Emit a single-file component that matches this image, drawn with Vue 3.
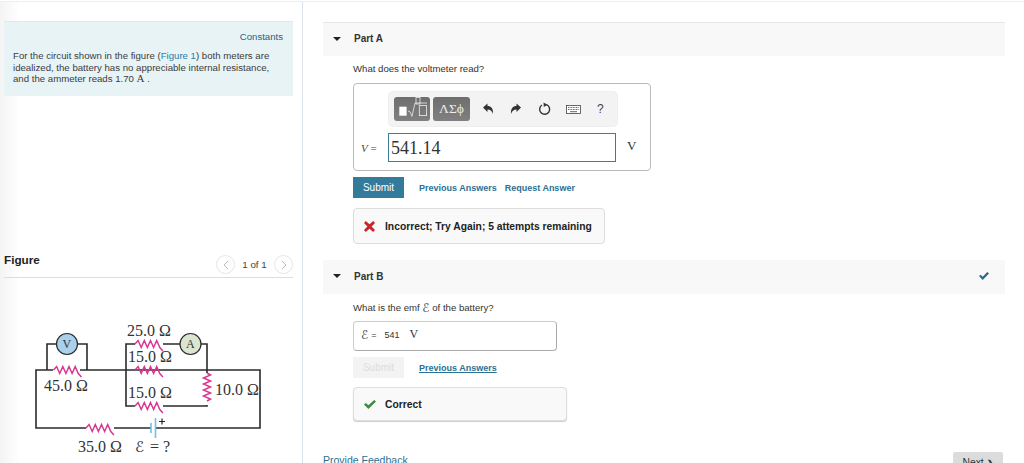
<script setup>
// resistor zigzags, drawn from their left end
const zig = (x, y) => {
  let d = `M${x} ${y}`
  const step = 3.1
  for (let i = 0; i < 9; i++) {
    const dy = i === 0 ? -3.5 : i === 8 ? 3.5 : i % 2 ? 7 : -7
    d += ` l${step} ${dy}`
  }
  return d
}
const horizontal = [[53.5, 370], [135, 344], [135, 370], [135, 406], [86, 428]]

const labels = [
  { x: 127, y: 336, t: '25.0 Ω' },
  { x: 128, y: 362, t: '15.0 Ω' },
  { x: 44, y: 391, t: '45.0 Ω' },
  { x: 128, y: 398, t: '15.0 Ω' },
  { x: 215, y: 395, t: '10.0 Ω' },
  { x: 78, y: 452, t: '35.0 Ω' },
]
</script>

<template>
  <div class="page">
    <div class="topline"></div>
    <div class="cols">
      <div class="left">
        <div class="intro">
          <div class="constants">Constants</div>
          <p>
            For the circuit shown in the figure (<span class="link">Figure 1</span>) both meters are
            idealized, the battery has no appreciable internal resistance,
            and the ammeter reads 1.70 <span class="serif amp">A</span> .
          </p>
        </div>

        <div class="fig-head">
          <span class="fig-title">Figure</span>
          <div class="pager">
            <span class="round">
              <svg width="6" height="10" viewBox="0 0 6 10"><path d="M5 1 1 5l4 4" fill="none" stroke="#bbb" stroke-width="1" /></svg>
            </span>
            <span class="count">1 of 1</span>
            <span class="round">
              <svg width="6" height="10" viewBox="0 0 6 10"><path d="M1 1l4 4-4 4" fill="none" stroke="#bbb" stroke-width="1" /></svg>
            </span>
          </div>
        </div>

        <svg class="circuit" width="289" height="185" viewBox="4 278 289 185">
          <g fill="none" stroke="#2b2b2b" stroke-width="1.6">
            <path d="M53 370H36V428H86M114 428H151M156 428H260V370H80" />
            <path d="M47 370V344H57M77 344H87V370" />
            <path d="M135 344H126V406H135M163 344H180M200 344H207V373M207 405V406H163" />
          </g>
          <g fill="none" stroke="#d9368f" stroke-width="1.500">
            <path v-for="(r, i) in horizontal" :key="i" :d="zig(r[0], r[1])" />
            <path d="M207 373l3.500 2-7 3 7 3-7 3 7 3-7 3 7 3-7 3 7 3-3.500 2" />
          </g>
          <circle cx="67" cy="344" r="10.500" fill="#a9d1ee" stroke="#2b2b2b" stroke-width="1.200" />
          <circle cx="190.500" cy="344" r="10.500" fill="#dce5cf" stroke="#2b2b2b" stroke-width="1.200" />
          <path d="M151 423V433M155.500 418V438" stroke="#6cc3e6" stroke-width="1.600" />
          <path d="M159 421.500H165M162 418.500V424.500" stroke="#222" stroke-width="1.200" />
          <g class="sym">
            <text x="62.500" y="348" font-size="12">V</text>
            <text x="186" y="348" font-size="12">A</text>
            <text v-for="l in labels" :key="l.t + l.x" :x="l.x" :y="l.y" font-size="16">{{ l.t }}</text>
            <text x="135" y="452" font-size="15"><tspan class="script">ℰ</tspan></text>
            <text x="150" y="452" font-size="16">= ?</text>
          </g>
        </svg>
      </div>

      <div class="right">
        <div class="part-head">
          <span class="tri"></span>
          <span class="part-name">Part A</span>
        </div>
        <div class="part-body">
          <div class="question">What does the voltmeter read?</div>
          <div class="answer">
            <div class="toolbar">
              <span class="tool-btn wide">
                <svg width="36" height="24" viewBox="0 0 36 24">
                  <rect x="5.300" y="9.700" width="7.300" height="9" fill="#fff" />
                  <rect x="22" y=".5" width="4" height="6.500" fill="none" stroke="#eee" stroke-width=".8" />
                  <path d="M14 14l2 .8 2 4.500 3-13.300h12" fill="none" stroke="#eee" stroke-width=".8" />
                  <rect x="25.300" y="8.600" width="7.300" height="10" fill="none" stroke="#eee" stroke-width=".8" />
                </svg>
              </span>
              <span class="tool-btn greek">ΛΣϕ</span>
              <svg class="ic ic-undo" width="12" height="12" viewBox="0 0 12 12"><path d="M1 4.500 5.500 .500V3C9 3 11.500 5.500 11 11 10 8 8.500 6.500 5.500 6.500V9Z" fill="#333" /></svg>
              <svg class="ic ic-redo" width="12" height="12" viewBox="0 0 12 12"><path d="M11 4.500 6.500 .500V3C3 3 .500 5.500 1 11 2 8 3.500 6.500 6.500 6.500V9Z" fill="#333" /></svg>
              <svg class="ic ic-reload" width="14" height="14" viewBox="0 0 14 14"><path d="M8.500 2.600A5 5 0 1 1 4 3" fill="none" stroke="#333" stroke-width="1.400" /><path d="M5.500 .500 9.500 2.800 5.800 5Z" fill="#333" /></svg>
              <svg class="ic ic-keys" width="15" height="9" viewBox="0 0 15 9">
                <rect x=".5" y=".5" width="14" height="8" fill="#fff" stroke="#444" stroke-width=".8" />
                <path d="M2 2.500h11M2 4.500h11" stroke="#666" stroke-dasharray="1 .6" />
                <path d="M4 6.700h7" stroke="#666" />
              </svg>
              <span class="help">?</span>
            </div>
            <div class="input-row">
              <span class="var"><i>V</i> =</span>
              <div class="value">541.14</div>
              <span class="unit">V</span>
            </div>
          </div>

          <div class="actions">
            <button class="submit">Submit</button>
            <span class="action-link">Previous Answers</span>
            <span class="action-link second">Request Answer</span>
          </div>

          <div class="feedback bad">
            <svg width="11" height="11" viewBox="0 0 11 11"><path d="M1.800 0 5.500 3.300 9.200 0 11 2 7.600 5.500 11 9 9.200 11 5.500 7.700 1.800 11 0 9 3.400 5.500 0 2Z" fill="#c9252b" /></svg>
            <span>Incorrect; Try Again; 5 attempts remaining</span>
          </div>
        </div>

        <div class="part-head part-b">
          <span class="tri"></span>
          <span class="part-name">Part B</span>
          <svg class="done" width="10" height="8" viewBox="0 0 10 8"><path d="M0 4 1.600 2.700 3.700 4.700 8.300 0 10 1.500 3.700 8Z" fill="#2a6a8a" /></svg>
        </div>
        <div class="part-body">
          <div class="question q-b">What is the emf <span class="emf">ℰ</span> of the battery?</div>
          <div class="answer-b">
            <span class="emf">ℰ</span><span class="eq">=</span><span class="num">541</span><span class="serif unit-b">V</span>
          </div>
          <div class="actions actions-b">
            <button class="submit off" disabled>Submit</button>
            <span class="action-link under">Previous Answers</span>
          </div>
          <div class="feedback good">
            <svg width="12" height="9" viewBox="0 0 12 9"><path d="M0 4.500 1.800 3 4.400 5.200 10.200 0 12 1.600 4.400 9Z" fill="#3b8a3e" /></svg>
            <span>Correct</span>
          </div>
        </div>

        <div class="foot">
          <span class="provide">Provide Feedback</span>
          <span class="next">Next <b>❯</b></span>
        </div>
      </div>
    </div>
  </div>
</template>

<style scoped>
.page {
  width: 1024px;
  height: 463px;
  overflow: hidden;
  font-family: "Liberation Sans", Arial, sans-serif;
  color: #333;
  background: #fff;
}

.topline {
  height: 1px;
  margin-top: 1px;
  background: #eee;
}

.cols {
  display: flex;
}

.left {
  box-sizing: border-box;
  width: 303px;
  height: 461px;
  padding: 19px 9px 0 4px;
  border-right: 1px solid #dbe2ec;
  background: linear-gradient(to right, #f4f4f4, #fff 20px);
}

.intro {
  box-sizing: border-box;
  height: 75px;
  padding: 9px 10px 0 9px;
  background: #e8f3f6;
  border-top: 1px solid #dfe8ec;
}

.constants {
  text-align: right;
  font-size: 9.600px;
  line-height: 12px;
  color: #1f6583;
}

.intro p {
  margin: 7px 0 0;
  font-size: 9.650px;
  line-height: 11.700px;
  color: #3c3c3c;
}

.link {
  color: #2a7da3;
}

.serif {
  font-family: "Liberation Serif", "Times New Roman", serif;
}

.amp {
  font-size: 11px;
}

.fig-head {
  display: flex;
  justify-content: space-between;
  align-items: flex-start;
  height: 35px;
  margin-top: 147px;
  border-bottom: 1px solid #ddd;
  box-sizing: border-box;
}

.fig-title {
  margin-top: 10px;
  font-size: 11.700px;
  font-weight: bold;
  color: #222;
}

.pager {
  display: flex;
  align-items: center;
  margin-top: 12px;
}

.round {
  display: flex;
  align-items: center;
  justify-content: center;
  box-sizing: border-box;
  width: 19px;
  height: 19px;
  border: 1px solid #e6e6e6;
  border-radius: 50%;
}

.count {
  width: 39px;
  text-align: center;
  font-size: 9.800px;
  color: #444;
}

.circuit {
  display: block;
}

.sym text {
  font-family: "Liberation Serif", "Times New Roman", serif;
  fill: #333;
}

.sym .script {
  font-family: "DejaVu Sans", sans-serif;
}

.right {
  box-sizing: border-box;
  width: 682px;
  height: 461px;
  margin-left: 20px;
  padding-top: 20px;
}

.part-head {
  display: flex;
  align-items: center;
  box-sizing: border-box;
  height: 34px;
  padding-left: 10px;
  padding-bottom: 2px;
  background: #f8f8f8;
  border-top: 1px solid #e6e6e6;
}

.part-b {
  margin-top: 16px;
  border-top: 0;
}

.tri {
  width: 0;
  height: 0;
  border-left: 4px solid transparent;
  border-right: 4px solid transparent;
  border-top: 4px solid #222;
}

.part-name {
  margin-left: 13px;
  font-size: 10px;
  font-weight: bold;
  color: #333;
}

.done {
  margin-left: auto;
  margin-right: 16px;
}

.part-body {
  padding-left: 30px;
}

.question {
  margin-top: 7px;
  font-size: 9.600px;
  line-height: 12px;
  color: #333;
}

.q-b {
  margin-top: 8px;
  display: flex;
  align-items: center;
  white-space: pre;
}

.emf {
  font-family: "DejaVu Sans", sans-serif;
  font-size: 12px;
  line-height: 12px;
  color: #444;
}

.answer {
  box-sizing: border-box;
  width: 298px;
  height: 88px;
  margin-top: 8px;
  padding: 7px 0 0 34px;
  border: 1px solid #bbb;
  border-radius: 4px;
}

.toolbar {
  display: flex;
  align-items: center;
  box-sizing: border-box;
  width: 230px;
  height: 36px;
  padding-left: 5px;
  background: #f3f3f3;
  border: 1px solid #eee;
  border-radius: 5px;
}

.tool-btn {
  display: flex;
  align-items: center;
  justify-content: center;
  box-sizing: border-box;
  width: 36px;
  height: 24px;
  background: linear-gradient(#6e6e6e, #808080);
  border-radius: 3px;
  color: #eee;
}

.greek {
  width: 37px;
  margin-left: 3px;
  font-family: "Liberation Serif", "Times New Roman", serif;
  font-size: 13.500px;
}

.ic {
  flex: none;
}

.ic-undo {
  margin-left: 12px;
}

.ic-redo {
  margin-left: 16px;
}

.ic-reload {
  margin-left: 16px;
}

.ic-keys {
  margin-left: 14px;
}

.help {
  margin-left: 16px;
  font-size: 12px;
  color: #444;
}

.input-row {
  display: flex;
  align-items: center;
  margin-top: 6px;
  margin-left: -27px;
}

.var {
  width: 27px;
  font-family: "Liberation Serif", "Times New Roman", serif;
  font-size: 11px;
  color: #444;
}

.value {
  box-sizing: border-box;
  width: 228px;
  height: 29px;
  padding-left: 2px;
  border: 1px solid #3c7d9b;
  font-family: "Liberation Serif", "Times New Roman", serif;
  font-size: 18px;
  line-height: 29px;
  color: #333;
}

.unit {
  margin-left: 11px;
  margin-bottom: 3px;
  font-family: "Liberation Serif", "Times New Roman", serif;
  font-size: 13px;
  color: #333;
}

.actions {
  display: flex;
  align-items: center;
  margin-top: 6px;
}

.actions-b {
  margin-top: 6px;
}

.submit {
  width: 51px;
  height: 21px;
  padding: 0;
  border: 0;
  background: #337a9b;
  color: #fff;
  font-family: "Liberation Sans", Arial, sans-serif;
  font-size: 10px;
}

.off {
  background: #f3f3f3;
  color: #ddd;
}

.action-link {
  margin-left: 15px;
  font-size: 9px;
  font-weight: bold;
  color: #2b7193;
}

.second {
  margin-left: 8px;
}

.under {
  text-decoration: underline;
}

.feedback {
  display: flex;
  align-items: center;
  box-sizing: border-box;
  margin-top: 10px;
  background: #f9f9f9;
  border: 1px solid #ddd;
  border-radius: 4px;
  font-size: 10.300px;
  font-weight: bold;
  color: #222;
}

.bad {
  width: 252px;
  height: 36px;
  padding-left: 10px;
  gap: 10px;
}

.good {
  width: 214px;
  height: 34px;
  margin-top: 9px;
  padding-left: 10px;
  gap: 9px;
  box-shadow: 0 1px 1px #ccc;
}

.answer-b {
  display: flex;
  align-items: center;
  box-sizing: border-box;
  width: 204px;
  height: 30px;
  margin-top: 7px;
  padding: 0 0 3px 7px;
  border: 1px solid #ccc;
  border-right-color: #aaa;
  border-bottom-color: #aaa;
  border-radius: 4px;
  font-size: 9px;
}

.eq {
  margin-left: 3px;
}

.num {
  margin-left: 8px;
}

.unit-b {
  margin-left: 10px;
  font-size: 12px;
}

.foot {
  display: flex;
  justify-content: space-between;
  align-items: flex-start;
  margin-top: 28px;
}

.provide {
  margin-top: 5px;
  font-size: 10.500px;
  line-height: 12px;
  color: #2b7193;
}

.next {
  box-sizing: border-box;
  width: 50px;
  height: 20px;
  margin-top: 3px;
  margin-right: 2px;
  padding-top: 5px;
  text-align: center;
  background: #dcdcdc;
  border-radius: 2px;
  font-size: 10.300px;
  line-height: 12px;
  color: #333;
}

.next b {
  font-size: 8px;
}
</style>

<style>
html,
body {
  margin: 0;
  background: #fff;
  overflow: hidden;
}
</style>
